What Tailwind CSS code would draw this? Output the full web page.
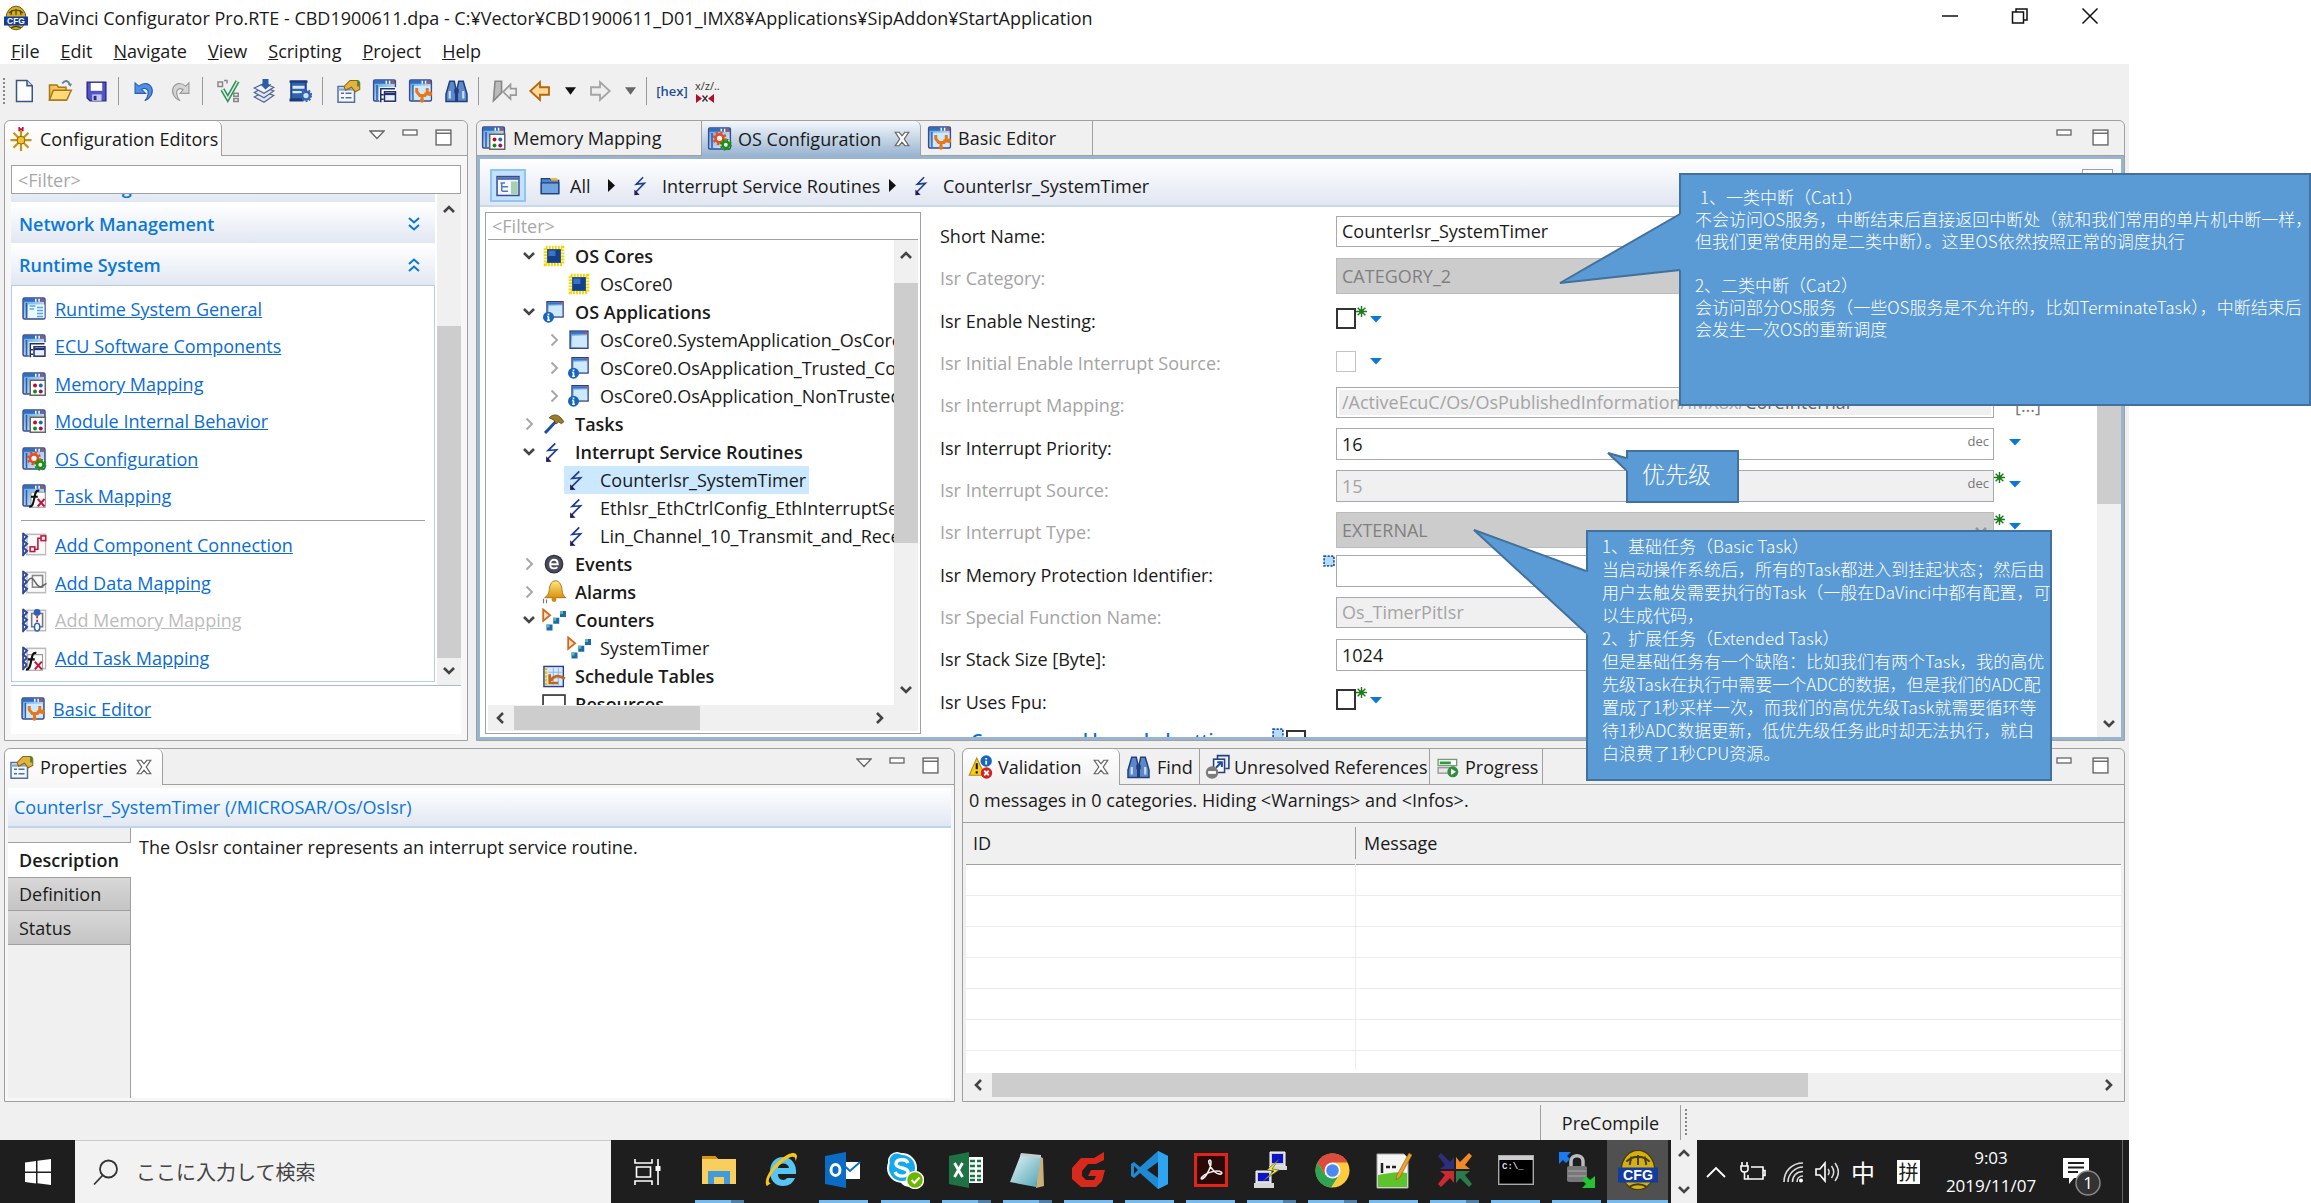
<!DOCTYPE html>
<html lang="en">
<head>
  <meta charset="UTF-8">
  <meta name="viewport" content="width=device-width, initial-scale=1.0">
  <title>DaVinci Configurator Pro.RTE</title>
  <script src="https://cdn.jsdelivr.net/npm/@tailwindcss/browser@4"></script>
</head>
<body class="bg-white overflow-x-hidden font-['Open_Sans','Noto_Sans_CJK_JP',sans-serif] text-[18px] leading-[24px] text-[#1a1a1a]">

  <!-- Icon set -->
  <svg width="0" height="0" class="absolute" aria-hidden="true">
    <defs>
      <linearGradient id="gBlue" x1="0" y1="0" x2="1" y2="1"><stop offset="0" stop-color="#5b9fe0"/><stop offset="1" stop-color="#eef9ff"/></linearGradient>
      <linearGradient id="gGold" x1="0" y1="0" x2="0" y2="1"><stop offset="0" stop-color="#ffe680"/><stop offset="1" stop-color="#d9930d"/></linearGradient>
      <linearGradient id="gNote" x1="0" y1="0" x2="1" y2="1"><stop offset="0" stop-color="#e8f6f8"/><stop offset="1" stop-color="#4fa3b5"/></linearGradient>
      <symbol id="win" viewBox="0 0 16 16"><rect x=".7" y=".7" width="14.6" height="14" rx="1" fill="url(#gBlue)" stroke="#3a4a8c"/><path d="M1 2.2h14" stroke="#2f6fc0" stroke-width="2"/><path d="M9.2 1.2v2M11.4 1.2v2" stroke="#fff"/><path d="M13.5 1.2v2" stroke="#e8442c" stroke-width="1.3"/><path d="M3 4v10" stroke="#2a5ea8"/></symbol>
      <symbol id="general" viewBox="0 0 16 16"><use href="#win"/><path d="M4 5h11v9H4z" fill="#eaf8ff"/><path d="M5 6h4M5 8h3M10 7h4M10 9h4M10 11h4M10 13h4" stroke="#58a8e0"/></symbol>
      <symbol id="ecu" viewBox="0 0 16 16"><use href="#win"/><path d="M4.500 15V5.500H16V16z" fill="#fff"/><path d="M5.500 15.500V6.500H15M5 10.500h2.500M5 13.500h2.500" fill="none" stroke="#23306e"/><rect x="8" y="8.500" width="7.300" height="6.300" fill="#e8f0fa" stroke="#23306e"/><path d="M8 10h7" stroke="#23306e" stroke-width="1.500"/></symbol>
      <symbol id="dots" viewBox="0 0 16 16"><use href="#win"/><rect x="5.500" y="5.500" width="10" height="10" fill="#fff" stroke="#666"/><circle cx="8.700" cy="9" r="1.300" fill="#d0021b"/><circle cx="12.500" cy="9" r="1.300" fill="#1466c8"/><circle cx="8.700" cy="13" r="1.300" fill="#0d8a1a"/><circle cx="12.500" cy="13" r="1.300" fill="#96125a"/></symbol>
      <symbol id="gears" viewBox="0 0 16 16"><use href="#win"/><circle cx="8" cy="7.500" r="2.600" fill="#fff" stroke="#f0481e" stroke-width="1.700"/><circle cx="8" cy="7.500" r="4" fill="none" stroke="#f0481e" stroke-width="1.400" stroke-dasharray="1.500 1.640"/><circle cx="12.200" cy="11.800" r="2.100" fill="#fff" stroke="#17920f" stroke-width="1.600"/><circle cx="12.200" cy="11.800" r="3.400" fill="none" stroke="#17920f" stroke-width="1.300" stroke-dasharray="1.300 1.370"/></symbol>
      <symbol id="fx" viewBox="0 0 16 16"><path d="M6 15.500V5.500h9.500v10z" fill="#fff" stroke="#999" stroke-width=".7"/><path d="M11.500 4.500C9 4 8.800 6.500 8.200 9.500S7 15.600 4.800 15M6 8.500h4.500" fill="none" stroke="#111" stroke-width="1.400"/><path d="M10.500 10l4.500 5M15 10l-4.500 5" stroke="#c4143c" stroke-width="1.300"/></symbol>
      <symbol id="task" viewBox="0 0 16 16"><use href="#win"/><use href="#fx"/></symbol>
      <symbol id="spring" viewBox="0 0 16 16"><rect x="3.500" y="1.500" width="12" height="13" fill="#fafafa" stroke="#bbb"/><path d="M1 .5v15" stroke="#1c2c78" stroke-width="1"/><path d="M1 1l2.500 2L1 5.500l2.500 2L1 10l2.500 2L1 14.800" fill="none" stroke="#2a4aa0" stroke-width="1.300"/></symbol>
      <symbol id="addconn" viewBox="0 0 16 16"><use href="#spring"/><rect x="5.500" y="9.500" width="3" height="3" fill="none" stroke="#c4143c"/><rect x="12.500" y="2.500" width="3" height="3" fill="none" stroke="#c4143c"/><path d="M8.500 11h2V4h2" fill="none" stroke="#c4143c"/></symbol>
      <symbol id="adddata" viewBox="0 0 16 16"><use href="#spring"/><rect x="7" y="3.500" width="6.500" height="7.500" fill="none" stroke="#888"/><path d="M4 7c3-4 4 0 6 2.500s3 1 6-1" fill="none" stroke="#666"/></symbol>
      <symbol id="addmem" viewBox="0 0 16 16"><use href="#spring"/><rect x="6.500" y="3.500" width="7" height="8.500" fill="none" stroke="#777"/><circle cx="10" cy="2.800" r="2.200" fill="#2a62b8"/><path d="M10 5v4.500" stroke="#d0021b" stroke-dasharray="1.500 1"/><ellipse cx="10" cy="12.200" rx="1.700" ry="2.500" fill="#fff" stroke="#2a62b8"/></symbol>
      <symbol id="addtask" viewBox="0 0 16 16"><use href="#spring"/><g transform="translate(-2 0)"><use href="#fx"/></g></symbol>
      <symbol id="basic" viewBox="0 0 16 16"><use href="#win"/><path d="M3.500 4.500h11V14h-11z" fill="#cdeafc"/><path d="M5.500 6v2.500l2 2.500h3.500l1.500-2V6M9 11v3.500M10.500 10h4" fill="none" stroke="#e8771a" stroke-width="2"/><circle cx="14.300" cy="9.800" r="1.500" fill="#e8771a"/><circle cx="9" cy="14.500" r="1.400" fill="#e8771a"/></symbol>
      <symbol id="star" viewBox="0 0 16 16"><path d="M8 1.500v14.500M1 8.800h14M3 3.800l10 10M13 3.800l-10 10" stroke="#c9940f" stroke-width="1.500"/><circle cx="8" cy="8.800" r="2.600" fill="#f4c430" stroke="#8a5a08" stroke-width=".6"/><path d="M6.800 0v2.800M9.200 0v2.800M6.800 1.400h2.400" stroke="#c4143c" stroke-width="1.100"/></symbol>
      <symbol id="bolt" viewBox="0 0 16 16"><path d="M10.500 1L5 6.500l6.500-.6L4.500 13" fill="none" stroke="#1f3f8f" stroke-width="1.300"/><path d="M3.500 15.300V10.800l4.200 4.200z" fill="#241a5c"/></symbol>
      <symbol id="chip" viewBox="0 0 16 16"><rect x="2" y="2" width="12" height="12" fill="none" stroke="#f0d800" stroke-width="3" stroke-dasharray="1.400 .8"/><rect x="3" y="3" width="10" height="10" fill="#12408a"/><rect x="4" y="4" width="5" height="4" fill="#3a72c4"/></symbol>
      <symbol id="app" viewBox="0 0 16 16"><rect x="1.500" y="1.500" width="13" height="12.500" fill="url(#gBlue)" stroke="#2c3e86"/><path d="M2 3h12" stroke="#3c74c4" stroke-width="1.800"/><path d="M12.500 2.200v1.600" stroke="#e8442c" stroke-width="1.400"/><path d="M3 5h10.500v8H3z" fill="#cdeafc"/></symbol>
      <symbol id="appi" viewBox="0 0 16 16"><g transform="translate(1.500 -1)"><use href="#app" width="14.500" height="14.500"/></g><circle cx="4" cy="11.800" r="4" fill="#1666c0"/><path d="M4 9v1.300M4 11.200v3M3 14h2M3 11.300h1" stroke="#fff" stroke-width="1.200"/></symbol>
      <symbol id="hammer" viewBox="0 0 16 16"><path d="M1.500 14.500L9.500 6" stroke="#1d4fa8" stroke-width="2.200"/><path d="M4.500 3.500C7 .5 11 1 13 3.500l2.200 2.800-1.800 1.500-2-1.300-2 1.500L7.800 5z" fill="#9a7a2c" stroke="#5c4412" stroke-width=".6"/></symbol>
      <symbol id="event" viewBox="0 0 16 16"><circle cx="8" cy="8" r="7" fill="#4b4b60" stroke="#30303f"/><path d="M5 8.200h6C11 5.500 9.600 4.600 8 4.600S4.900 6 4.900 8.100 6.300 11.500 8 11.500c1.200 0 2-.3 2.700-1" fill="none" stroke="#fff" stroke-width="1.500"/></symbol>
      <symbol id="bell" viewBox="0 0 16 16"><path d="M9 .5c-3 0-4 3.500-4.200 6.500-.2 2-1.200 3.500-3 4.800h14c-1.500-1.300-2.200-2.800-2.400-4.800C13.200 4 12 .5 9 .5z" fill="url(#gGold)" stroke="#a86c08" stroke-width=".6"/><circle cx="8" cy="13" r="1.600" fill="#c88a10"/><path d="M1 12.500v3M3 13v2.500" stroke="#777" stroke-width=".8"/></symbol>
      <symbol id="counter" viewBox="0 0 16 16"><path d="M.8 1l4.600 3.800L.8 8.600z" fill="#fde3c4" stroke="#d2691e" stroke-width="1.200"/><path d="M12 2h4v4h-4zM7.500 6.500h4v4h-4zM3 11h4v4H3z" fill="#1c6aa8"/><path d="M12 2h2v2h-2zM7.500 6.500h2v2h-2zM3 11h2v2H3z" fill="#5fb8b0"/></symbol>
      <symbol id="sched" viewBox="0 0 16 16"><rect x="1" y="1" width="13.500" height="14" fill="#d8eaff" stroke="#2c3e86"/><path d="M2.500 2v12" stroke="#e8c800" stroke-width="1.600" stroke-dasharray="1.600 1"/><path d="M4 5h10M4 9h10M7.500 2v12M11 2v12" stroke="#8fb8e8" stroke-width=".7"/><path d="M5 6.500v6h6M6 11c1-3.500 5-4.500 9.500-1.500" fill="none" stroke="#c86414" stroke-width="1.800"/></symbol>
      <symbol id="table" viewBox="0 0 16 16"><rect x=".7" y=".7" width="14.600" height="14" fill="#fff" stroke="#444" stroke-width="1.200"/></symbol>
      <symbol id="folder" viewBox="0 0 16 16"><path d="M1 2h7l1 1.500h6V14H1z" fill="#4c86cc" stroke="#1f3f7f"/><path d="M8 1.500h5.500l1 2.300H9z" fill="#f0b83c"/><path d="M1 5.500h14V14H1z" fill="#6fa4de" stroke="#1f3f7f"/></symbol>
      <symbol id="tree" viewBox="0 0 16 16"><rect x=".7" y="1.700" width="14.600" height="12.600" fill="#f2f8ff" stroke="#3a4a8c"/><path d="M1 3h14" stroke="#4d6fb0" stroke-width="1.800"/><path d="M3 6h3M4 8.500h4M4 11.500h4M3.800 6v5.500" stroke="#5878b0"/><rect x="10" y="5" width="4.500" height="8.500" fill="#a4d0b4"/></symbol>
      <symbol id="new" viewBox="0 0 16 16"><path d="M3 1h7l3.500 3.500V15H3z" fill="#fbfdff" stroke="#3a567c"/><path d="M10 1v3.500h3.500" fill="#c8d8ea" stroke="#3a567c"/></symbol>
      <symbol id="open" viewBox="0 0 16 16"><path d="M1 4h5l1 1.500h5V14H1z" fill="#f3c55c" stroke="#a87814"/><path d="M3.500 7.500h12L12.500 14H1z" fill="#ffd97a" stroke="#a87814"/><path d="M9.500 3c2-2.500 4-2 5 .5" fill="none" stroke="#5f7f9a" stroke-width="1.300"/><path d="M13 3.200h3l-1 2z" fill="#5f7f9a"/></symbol>
      <symbol id="save" viewBox="0 0 16 16"><path d="M1.500 1.500h13v13h-11l-2-2z" fill="#5353c6" stroke="#2c2c8a"/><path d="M4 2h8v5.500H4z" fill="#fff"/><path d="M5 10h6.500v4.500H5z" fill="#c8c8e8"/><path d="M6 11h2v3H6z" fill="#2c2c8a"/></symbol>
      <symbol id="undo" viewBox="0 0 16 16"><path d="M2.500 3v6.500H9L6.500 7C9 5.500 11 7 10.500 10c-.2 1.500-1 3-2 4 3.500-1.500 5.500-5 4.200-8C11.300 3 7.800 2.500 4.800 5z" fill="#4f8fe8" stroke="#2c5cb0" stroke-width=".7"/></symbol>
      <symbol id="redo" viewBox="0 0 16 16"><path d="M13.500 3v6.500H8L10 7.200C7.500 5.700 5.500 7 6 10c.2 1.500 1 3 2 4-3.500-1.500-5.500-5-4.200-8C5.200 3 8.600 2.500 11.400 5z" fill="#d4d4d4" stroke="#9a9a9a" stroke-width=".7"/></symbol>
      <symbol id="check" viewBox="0 0 16 16"><path d="M4 7l3.500 6L14 1.500" fill="none" stroke="#2f8f5f" stroke-width="3"/><path d="M4 7l3.500 6L14 1.500" fill="none" stroke="#d8f0e0" stroke-width="1"/><path d="M1 2h3v3H1zM5 1h2v2M11.500 9.500h3v2h-3zM11.500 13h3v2h-3z" fill="none" stroke="#888"/></symbol>
      <symbol id="layers" viewBox="0 0 16 16"><path d="M8 8.500l6.500 2.500L8 15.500 1.500 12z" fill="#dfe8f4" stroke="#53628f" stroke-width=".8"/><path d="M8 5.500l6.500 2.500L8 12.500 1.500 9z" fill="#dfe8f4" stroke="#53628f" stroke-width=".8"/><path d="M8 3l6.500 2.500L8 9.500 1.500 6z" fill="#eef4fc" stroke="#53628f" stroke-width=".8"/><path d="M7 0h4v3.500h2L9 7 5.500 3.500H7z" fill="#2a5ea8"/></symbol>
      <symbol id="gen" viewBox="0 0 16 16"><path d="M2 1.500h10v12H2z" fill="#2f62b0" stroke="#1c3a7c"/><path d="M3 4.500h8v2H3zM3 8h8v1.500H3z" fill="#dbe8fa"/><path d="M1 1h12v1.500H1zM1 13h9v2H1z" fill="#1c3a7c"/><circle cx="12" cy="11" r="2.600" fill="#cfe0f8" stroke="#3464b0" stroke-width="1.700"/><circle cx="12" cy="11" r="3.800" fill="none" stroke="#3464b0" stroke-dasharray="1.300 1.100"/></symbol>
      <symbol id="props" viewBox="0 0 16 16"><rect x="1" y="5" width="11" height="10.500" fill="#f4f8fc" stroke="#51709c"/><path d="M1 7h11" stroke="#7fa4d4" stroke-width="1.500"/><path d="M3 9.500h2M6 9.500h4M3 12.500h2M6 12.500h4" stroke="#51709c"/><path d="M5 5l4-4h5l1.500 1.500V7l-3 1.500L10 5.500 6 7.500z" fill="#e2b43c" stroke="#8a6414" stroke-width=".7"/><path d="M14.500 1v4" stroke="#3a8a3a" stroke-width="1.500"/></symbol>
      <symbol id="binoc" viewBox="0 0 16 16"><path d="M3.500 1.500h3L7.500 6v9h-6.500v-5zM12.500 1.500h-3L8.500 6v9H15v-5z" fill="#5c88c8" stroke="#1f3f7f"/><path d="M6.500 6.500h3v3h-3z" fill="#1f3f7f"/><path d="M3.500 8v5M12.500 8v5" stroke="#c8dcf8" stroke-width="1.500"/></symbol>
      <symbol id="lastedit" viewBox="0 0 16 16"><path d="M15.500 6.500v4H12V13L7.500 8.500 12 4v2.500z" fill="#eee" stroke="#999"/><path d="M1.500 14L2.500 2h4v7z" fill="#bbb" stroke="#888"/></symbol>
      <symbol id="back" viewBox="0 0 16 16"><path d="M14 5.500v5H8V14L1.500 8 8 2v3.500z" fill="#ffd89a" stroke="#b8640a" stroke-width="1.200"/></symbol>
      <symbol id="fwd" viewBox="0 0 16 16"><path d="M2 5.500v5h6V14l6.500-6L8 2v3.500z" fill="#eee" stroke="#a4a4a4" stroke-width="1.200"/></symbol>
      <symbol id="close" viewBox="0 0 16 16"><path d="M2 2h3.500L8 5.200 10.500 2H14L10 8l4 6h-3.500L8 10.800 5.500 14H2l4-6z" fill="#fff" stroke="#666" stroke-width="1.100"/></symbol>
      <symbol id="valid" viewBox="0 0 16 16"><path d="M5.500 2L.5 13.500h10.500z" fill="#f8cc1c" stroke="#b88a08" stroke-width=".7"/><path d="M5.500 5.500v4M5.500 10.800v1.500" stroke="#111" stroke-width="1.400"/><circle cx="11.800" cy="4" r="3.800" fill="#1666c0"/><path d="M11.800 2v1M11.800 3.800v2.500" stroke="#fff" stroke-width="1.200"/><circle cx="12" cy="12" r="3.800" fill="#d42020"/><path d="M10.500 10.500l3 3M13.500 10.500l-3 3" stroke="#fff" stroke-width="1.200"/></symbol>
      <symbol id="unres" viewBox="0 0 16 16"><path d="M8 3V.7h7.300V9H13" fill="#e8f0fc" stroke="#24407f"/><rect x="5.500" y="3" width="7" height="8.500" fill="#fff" stroke="#24407f"/><path d="M7 8.500l3.500-3.500M7.800 5h3v3" fill="none" stroke="#1c4ca0" stroke-width="1.300"/><circle cx="4.500" cy="11.500" r="4" fill="#7c7c7c"/><path d="M2 11.500h5" stroke="#fff" stroke-width="1.800"/></symbol>
      <symbol id="prog" viewBox="0 0 16 16"><rect x=".8" y="2.500" width="13.500" height="4.500" fill="#fff" stroke="#7a9a7a"/><path d="M2 4h8v2H2z" fill="#2f9a3f"/><rect x=".8" y="8.500" width="9" height="4" fill="#e8e8e8" stroke="#999"/><circle cx="11.500" cy="11.500" r="4" fill="#2f8f3f"/><path d="M10.200 9.200v4.600l3.600-2.300z" fill="#fff"/></symbol>
      <symbol id="v" viewBox="0 0 14 14"><path d="M2 4l5 5 5-5" fill="none" stroke="#444" stroke-width="2.600"/></symbol>
      <symbol id="r" viewBox="0 0 14 14"><path d="M4.500 1.500L10 7l-5.500 5.500" fill="none" stroke="#a8a8a8" stroke-width="2"/></symbol>
      <symbol id="max" viewBox="0 0 16 16"><rect x="1" y="1" width="14" height="14" fill="#fff" stroke="#666" stroke-width="1.300"/><path d="M1 4h14" stroke="#666" stroke-width="1.300"/></symbol>
      <symbol id="min" viewBox="0 0 16 16"><rect x="1" y="1" width="14" height="5" fill="#fff" stroke="#666" stroke-width="1.300"/></symbol>
      <symbol id="menu" viewBox="0 0 16 16"><path d="M1 2h14l-7 7.500z" fill="#fff" stroke="#666" stroke-width="1.300"/></symbol>
      <symbol id="ast" viewBox="0 0 10 10"><path d="M5 0v10M0 5h10M1.500 1.500l7 7M8.500 1.500l-7 7" stroke="#1c7a1c" stroke-width="1.300"/><circle cx="5" cy="5" r="2" fill="#1c7a1c"/></symbol>
      <symbol id="drop" viewBox="0 0 12 8"><path d="M0 1h12L6 7.500z" fill="#0a78d7"/></symbol>
      <symbol id="mark" viewBox="0 0 11 11"><rect x="1" y="1" width="9" height="9" fill="#b8dcf8" stroke="#1c5cb0" stroke-width="1.600" stroke-dasharray="2 1.200"/></symbol>
      <symbol id="cfg" viewBox="0 0 24 24"><ellipse cx="12" cy="12" rx="10" ry="11.800" fill="#d4b014" stroke="#4a3c08" stroke-width=".8"/><path d="M5 7c4-4 10-4 14 0M12 3v6M8 4l-1 5M16 4l1 5M7 22c3-2 7-2 10 0" fill="none" stroke="#4a3c08" stroke-width="1.200"/><rect x="0" y="10.500" width="24" height="9" fill="#143c9c"/><text x="12" y="18" text-anchor="middle" font-family="Liberation Sans" font-weight="bold" font-size="8.500" fill="#fff">CFG</text></symbol>
    </defs>
  </svg>

  <div class="relative min-h-screen">
    <div class="mr-[182px] min-h-screen flex flex-col bg-[#f0f0f0]">

      <!-- Title bar -->
      <header class="h-[36px] flex items-center bg-white pl-1 pr-[29px]">
        <svg class="w-[24px] h-[28px]"><use href="#cfg"/></svg>
        <h1 class="pl-2 flex-1 whitespace-nowrap">DaVinci Configurator Pro.RTE - CBD1900611.dpa - C:¥Vector¥CBD1900611_D01_IMX8¥Applications¥SipAddon¥StartApplication</h1>
        <div class="flex items-center gap-[50px] pb-1">
          <button aria-label="Minimize"><svg class="w-5 h-5" viewBox="0 0 20 20"><path d="M2 10h16" stroke="#111" stroke-width="1.500"/></svg></button>
          <button aria-label="Restore"><svg class="w-5 h-5" viewBox="0 0 20 20"><path d="M2.500 6h11v11h-11zM6 6V3h11v11h-3.500" fill="none" stroke="#111" stroke-width="1.500"/></svg></button>
          <button aria-label="Close"><svg class="w-5 h-5" viewBox="0 0 20 20"><path d="M2.500 2.500l15 15M17.500 2.500l-15 15" stroke="#111" stroke-width="1.500"/></svg></button>
        </div>
      </header>

      <!-- Menu -->
      <nav class="h-[28px] flex items-center gap-[21px] bg-white pl-[11px] pt-[2px]">
        <button><u>F</u>ile</button>
        <button><u>E</u>dit</button>
        <button><u>N</u>avigate</button>
        <button><u>V</u>iew</button>
        <button><u>S</u>cripting</button>
        <button><u>P</u>roject</button>
        <button><u>H</u>elp</button>
      </nav>

      <!-- Toolbar -->
      <div class="h-[56px] flex items-center pb-[2px]">
        <span class="w-[6px] h-[26px] border-l-2 border-dotted border-[#888] ml-[3px] -mr-[3px]"></span>
        <button class="w-[36px] flex justify-center" aria-label="New"><svg class="w-[24px] h-[24px]"><use href="#new"/></svg></button>
        <button class="w-[36px] flex justify-center" aria-label="Open"><svg class="w-[26px] h-[24px]"><use href="#open"/></svg></button>
        <button class="w-[36px] flex justify-center" aria-label="Save"><svg class="w-[23px] h-[23px]"><use href="#save"/></svg></button>
        <span class="w-px h-[28px] bg-[#999] ml-1 mr-[7px]"></span>
        <button class="w-[36px] flex justify-center" aria-label="Undo"><svg class="w-[26px] h-[26px]"><use href="#undo"/></svg></button>
        <button class="w-[36px] flex justify-center" aria-label="Redo"><svg class="w-[26px] h-[26px]"><use href="#redo"/></svg></button>
        <span class="w-px h-[28px] bg-[#999] ml-1 mr-[7px]"></span>
        <button class="w-[36px] flex justify-center" aria-label="Validate"><svg class="w-[25px] h-[24px]"><use href="#check"/></svg></button>
        <button class="w-[36px] flex justify-center" aria-label="Layers"><svg class="w-[24px] h-[24px]"><use href="#layers"/></svg></button>
        <button class="w-[36px] flex justify-center" aria-label="Generate"><svg class="w-[24px] h-[24px]"><use href="#gen"/></svg></button>
        <span class="w-px h-[28px] bg-[#999] ml-1 mr-[7px]"></span>
        <button class="w-[36px] flex justify-center" aria-label="Properties"><svg class="w-[25px] h-[24px]"><use href="#props"/></svg></button>
        <button class="w-[36px] flex justify-center" aria-label="Components"><svg class="w-[25px] h-[24px]"><use href="#ecu"/></svg></button>
        <button class="w-[36px] flex justify-center" aria-label="Basic Editor"><svg class="w-[25px] h-[24px]"><use href="#basic"/></svg></button>
        <button class="w-[36px] flex justify-center" aria-label="Find"><svg class="w-[25px] h-[24px]"><use href="#binoc"/></svg></button>
        <span class="w-px h-[28px] bg-[#999] ml-1 mr-[7px]"></span>
        <button class="w-[36px] flex justify-center" aria-label="Last edit"><svg class="w-[26px] h-[26px]"><use href="#lastedit"/></svg></button>
        <button class="w-[36px] flex justify-center" aria-label="Back"><svg class="w-[24px] h-[24px]"><use href="#back"/></svg></button>
        <button class="w-[24px] flex justify-center" aria-label="Back history"><svg class="w-[11px] h-[8px]" viewBox="0 0 12 8"><path d="M0 0h12L6 8z" fill="#111"/></svg></button>
        <button class="w-[36px] flex justify-center" aria-label="Forward"><svg class="w-[24px] h-[24px]"><use href="#fwd"/></svg></button>
        <button class="w-[24px] flex justify-center" aria-label="Forward history"><svg class="w-[11px] h-[8px]" viewBox="0 0 12 8"><path d="M0 0h12L6 8z" fill="#666"/></svg></button>
        <span class="w-px h-[28px] bg-[#999] ml-1 mr-[7px]"></span>
        <button class="w-[36px] text-[13px] leading-[20px] font-semibold text-[#1f4f8f]">[hex]</button>
        <button class="w-[36px]" aria-label="Names"><svg class="w-[27px] h-[28px] mx-auto" viewBox="0 0 27 28"><text x="0" y="13" font-family="Open Sans" font-size="11" fill="#333">x/z/..</text><path d="M1 17v9l6-4.500zM19 17v9l-6-4.500z" fill="#b01030"/><path d="M7.500 18.500l5 6M12.500 18.500l-5 6" stroke="#333" stroke-width="1.300"/></svg></button>
      </div>

      <!-- Upper row -->
      <div class="flex gap-2 pl-1 pr-1 h-[621px]">

        <!-- Configuration Editors -->
        <section class="w-[464px] shrink-0 flex flex-col border border-[#a0a0a0] rounded-t-md bg-[#f7f7f7]">
          <div class="h-[35px] shrink-0 flex">
            <div class="w-[217px] flex items-center gap-[7px] pl-1 border-r border-[#a0a0a0] rounded-tr-md bg-gradient-to-b from-white to-[#f7f7f7] rounded-tl-md whitespace-nowrap">
              <svg class="w-[24px] h-[26px] shrink-0"><use href="#star"/></svg>Configuration Editors
            </div>
            <div class="flex-1 flex justify-end gap-[17px] pt-[8px] pr-[15px] border-b border-[#a0a0a0] bg-[#f0f0f0] rounded-tr-md">
              <svg class="w-[16px] h-[16px]"><use href="#menu"/></svg>
              <svg class="w-[16px] h-[16px]"><use href="#min"/></svg>
              <svg class="w-[17px] h-[17px]"><use href="#max"/></svg>
            </div>
          </div>
          <div class="flex-1 min-h-0 flex flex-col m-[6px] mt-[9px] bg-white">
            <input type="text" aria-label="Filter editors" placeholder="&lt;Filter&gt;" class="h-[29px] shrink-0 border border-[#a0a0a0] bg-white px-[6px] placeholder:text-[#a8a8a8]">
            <div class="flex h-[491px] overflow-hidden">
              <div class="flex-1 min-w-0">
                <h2 class="h-[39px] -mt-[31px] mb-[2px] flex items-center pt-[8px] px-2 font-semibold text-[#0a78d7] bg-gradient-to-b from-white to-[#e1e7f2]">Mode Management</h2>
                <h2 class="h-[39px] mb-[2px] flex items-center justify-between pl-2 pr-[14px] font-semibold text-[#0a78d7] bg-gradient-to-b from-white to-[#e1e7f2]">Network Management
                  <svg class="w-[14px] h-[16px]" viewBox="0 0 14 16"><path d="M2 2l5 4.500L12 2M2 9l5 4.500L12 9" fill="none" stroke="#0a78d7" stroke-width="2"/></svg></h2>
                <h2 class="h-[40px] flex items-center justify-between pl-2 pr-[14px] font-semibold text-[#0a78d7] bg-gradient-to-b from-white to-[#e1e7f2]">Runtime System
                  <svg class="w-[14px] h-[16px]" viewBox="0 0 14 16"><path d="M2 7l5-4.500L12 7M2 14l5-4.500L12 14" fill="none" stroke="#0a78d7" stroke-width="2"/></svg></h2>
                <div class="border border-[#b8cce4] pt-1 pb-1 px-[9px] text-[#0a6cd6]">
                  <ul class="grid grid-rows-6 h-[226px] pb-px">
                    <li class="flex items-center gap-2"><svg class="w-[26px] h-[24px]"><use href="#general"/></svg><a href="#" class="underline">Runtime System General</a></li>
                    <li class="flex items-center gap-2"><svg class="w-[26px] h-[24px]"><use href="#ecu"/></svg><a href="#" class="underline">ECU Software Components</a></li>
                    <li class="flex items-center gap-2"><svg class="w-[26px] h-[24px]"><use href="#dots"/></svg><a href="#" class="underline">Memory Mapping</a></li>
                    <li class="flex items-center gap-2"><svg class="w-[26px] h-[24px]"><use href="#dots"/></svg><a href="#" class="underline">Module Internal Behavior</a></li>
                    <li class="flex items-center gap-2"><svg class="w-[26px] h-[24px]"><use href="#gears"/></svg><a href="#" class="underline">OS Configuration</a></li>
                    <li class="flex items-center gap-2"><svg class="w-[26px] h-[24px]"><use href="#task"/></svg><a href="#" class="underline">Task Mapping</a></li>
                  </ul>
                  <hr class="border-[#a0a0a0] mt-1 mb-[5px]">
                  <ul class="grid grid-rows-4 h-[151px]">
                    <li class="flex items-center gap-2"><svg class="w-[26px] h-[25px]"><use href="#addconn"/></svg><a href="#" class="underline">Add Component Connection</a></li>
                    <li class="flex items-center gap-2"><svg class="w-[26px] h-[25px]"><use href="#adddata"/></svg><a href="#" class="underline">Add Data Mapping</a></li>
                    <li class="flex items-center gap-2"><svg class="w-[26px] h-[25px]"><use href="#addmem"/></svg><a href="#" class="underline text-[#bcbcbc]">Add Memory Mapping</a></li>
                    <li class="flex items-center gap-2"><svg class="w-[26px] h-[25px]"><use href="#addtask"/></svg><a href="#" class="underline">Add Task Mapping</a></li>
                  </ul>
                </div>
              </div>
              <div class="w-[24px] ml-[2px] flex flex-col items-center bg-[#f0f0f0]">
                <svg class="w-[14px] h-[14px] mt-[8px] rotate-180"><use href="#v"/></svg>
                <div class="w-full h-[332px] mt-[110px] bg-[#cdcdcd]"></div>
                <svg class="w-[14px] h-[14px] mt-[6px]"><use href="#v"/></svg>
              </div>
            </div>
            <div class="border-t border-[#a9b9d0] h-[46px] flex items-center gap-[7px] pl-[9px] text-[#0a6cd6]">
              <svg class="w-[26px] h-[24px]"><use href="#basic"/></svg><a href="#" class="underline">Basic Editor</a>
            </div>
          </div>
        </section>

        <!-- Editor area -->
        <section class="flex-1 min-w-0 flex flex-col border border-[#a0a0a0] rounded-t-md">
          <div class="h-[35px] shrink-0 flex whitespace-nowrap" role="tablist">
            <button role="tab" class="w-[225px] flex items-center gap-[7px] pl-1 border-r border-b border-[#a0a0a0]"><svg class="w-[25px] h-[24px] shrink-0"><use href="#dots"/></svg>Memory Mapping</button>
            <button role="tab" class="w-[219px] flex items-center gap-[6px] pl-[5px] border-r border-[#a0a0a0] rounded-t-md bg-gradient-to-b from-[#f4f8fc] to-[#99b4d1]"><svg class="w-[25px] h-[24px] shrink-0"><use href="#gears"/></svg>OS Configuration<svg class="w-[18px] h-[18px] ml-[6px]"><use href="#close"/></svg></button>
            <button role="tab" class="w-[172px] flex items-center gap-[6px] pl-[6px] border-r border-b border-[#a0a0a0]"><svg class="w-[25px] h-[24px] shrink-0"><use href="#basic"/></svg>Basic Editor</button>
            <div class="flex-1 flex justify-end gap-[20px] pt-[8px] pr-[15px] border-b border-[#a0a0a0]">
              <svg class="w-[16px] h-[16px]"><use href="#min"/></svg>
              <svg class="w-[17px] h-[17px]"><use href="#max"/></svg>
            </div>
          </div>
          <div class="flex-1 min-h-0 flex flex-col border-[3px] border-[#99b4d1] bg-white">
            <nav class="h-[48px] shrink-0 flex items-center pt-[7px] pl-[10px] pr-[8px] border-b-2 border-[#c9d9ec] bg-gradient-to-b from-white to-[#e1e6f1] whitespace-nowrap">
              <button aria-label="Toggle tree" class="w-[36px] h-[33px] mr-[12px] flex items-center justify-center border-2 border-[#8fc4f4] bg-[#c4e2fb]"><svg class="w-[26px] h-[24px]"><use href="#tree"/></svg></button>
              <svg class="w-[24px] h-[20px]"><use href="#folder"/></svg>
              <button class="ml-[8px] w-[38px] text-left">All</button>
              <svg class="w-[7px] h-[13px]" viewBox="0 0 7 13"><path d="M0 0l7 6.500L0 13z" fill="#111"/></svg>
              <svg class="w-[22px] h-[20px] ml-[14px]"><use href="#bolt"/></svg>
              <button class="ml-[11px] w-[227px] text-left">Interrupt Service Routines</button>
              <svg class="w-[7px] h-[13px]" viewBox="0 0 7 13"><path d="M0 0l7 6.500L0 13z" fill="#111"/></svg>
              <svg class="w-[22px] h-[20px] ml-[14px]"><use href="#bolt"/></svg>
              <button class="ml-[11px]">CounterIsr_SystemTimer</button>
              <button aria-label="View menu" class="ml-auto w-[31px] h-[33px] border border-[#a0a0a0] bg-white"></button>
            </nav>
            <div class="flex-1 min-h-0 flex">

              <!-- Tree -->
              <div class="w-[436px] shrink-0 ml-[5px] mt-[5px] mb-[3px] flex flex-col border border-[#a0a0a0] p-[2px] pt-0">
                <input type="text" aria-label="Filter tree" placeholder="&lt;Filter&gt;" class="h-[27px] shrink-0 px-1 border-b border-[#a0a0a0] placeholder:text-[#a8a8a8]">
                <div class="flex-1 min-h-0 flex">
                  <ul class="flex-1 min-w-0 overflow-hidden pt-[2px] whitespace-nowrap">
                    <li class="h-[28px] flex items-center pl-[34px] font-semibold"><svg class="w-[14px] h-[14px]"><use href="#v"/></svg><svg class="w-[24px] h-[22px] ml-[6px] mr-[9px] shrink-0"><use href="#chip"/></svg>OS Cores</li>
                    <li class="h-[28px] flex items-center pl-[79px]"><svg class="w-[24px] h-[22px] mr-[9px] shrink-0"><use href="#chip"/></svg>OsCore0</li>
                    <li class="h-[28px] flex items-center pl-[34px] font-semibold"><svg class="w-[14px] h-[14px]"><use href="#v"/></svg><svg class="w-[24px] h-[22px] ml-[6px] mr-[9px] shrink-0"><use href="#appi"/></svg>OS Applications</li>
                    <li class="h-[28px] flex items-center pl-[59px]"><svg class="w-[14px] h-[14px] shrink-0"><use href="#r"/></svg><svg class="w-[24px] h-[22px] ml-[6px] mr-[9px] shrink-0"><use href="#app"/></svg>OsCore0.SystemApplication_OsCore0</li>
                    <li class="h-[28px] flex items-center pl-[59px]"><svg class="w-[14px] h-[14px] shrink-0"><use href="#r"/></svg><svg class="w-[24px] h-[22px] ml-[6px] mr-[9px] shrink-0"><use href="#appi"/></svg>OsCore0.OsApplication_Trusted_Core0</li>
                    <li class="h-[28px] flex items-center pl-[59px]"><svg class="w-[14px] h-[14px] shrink-0"><use href="#r"/></svg><svg class="w-[24px] h-[22px] ml-[6px] mr-[9px] shrink-0"><use href="#appi"/></svg>OsCore0.OsApplication_NonTrusted_Core0</li>
                    <li class="h-[28px] flex items-center pl-[34px] font-semibold"><svg class="w-[14px] h-[14px]"><use href="#r"/></svg><svg class="w-[24px] h-[22px] ml-[6px] mr-[9px] shrink-0"><use href="#hammer"/></svg>Tasks</li>
                    <li class="h-[28px] flex items-center pl-[34px] font-semibold"><svg class="w-[14px] h-[14px]"><use href="#v"/></svg><svg class="w-[22px] h-[21px] ml-[5px] mr-[12px] shrink-0"><use href="#bolt"/></svg>Interrupt Service Routines</li>
                    <li class="h-[28px] flex pl-[76px]"><span class="flex items-center pr-[3px] bg-[#cce8ff]"><svg class="w-[22px] h-[21px] ml-px mr-[13px] shrink-0"><use href="#bolt"/></svg>CounterIsr_SystemTimer</span></li>
                    <li class="h-[28px] flex items-center pl-[77px]"><svg class="w-[22px] h-[21px] mr-[13px] shrink-0"><use href="#bolt"/></svg>EthIsr_EthCtrlConfig_EthInterruptService</li>
                    <li class="h-[28px] flex items-center pl-[77px]"><svg class="w-[22px] h-[21px] mr-[13px] shrink-0"><use href="#bolt"/></svg>Lin_Channel_10_Transmit_and_Receive</li>
                    <li class="h-[28px] flex items-center pl-[34px] font-semibold"><svg class="w-[14px] h-[14px]"><use href="#r"/></svg><svg class="w-[24px] h-[20px] ml-[6px] mr-[9px] shrink-0"><use href="#event"/></svg>Events</li>
                    <li class="h-[28px] flex items-center pl-[34px] font-semibold"><svg class="w-[14px] h-[14px]"><use href="#r"/></svg><svg class="w-[24px] h-[24px] ml-[6px] mr-[9px] shrink-0"><use href="#bell"/></svg>Alarms</li>
                    <li class="h-[28px] flex items-center pl-[34px] font-semibold"><svg class="w-[14px] h-[14px]"><use href="#v"/></svg><svg class="w-[24px] h-[24px] ml-[6px] mr-[9px] shrink-0"><use href="#counter"/></svg>Counters</li>
                    <li class="h-[28px] flex items-center pl-[79px]"><svg class="w-[24px] h-[24px] mr-[9px] shrink-0"><use href="#counter"/></svg>SystemTimer</li>
                    <li class="h-[28px] flex items-center pl-[54px] font-semibold"><svg class="w-[24px] h-[23px] mr-[9px] shrink-0"><use href="#sched"/></svg>Schedule Tables</li>
                    <li class="h-[28px] flex items-start pt-[2px] pl-[54px] font-semibold"><svg class="w-[24px] h-[24px] mt-[2px] mr-[9px] shrink-0"><use href="#table"/></svg>Resources</li>
                  </ul>
                  <div class="w-[24px] shrink-0 flex flex-col items-center bg-[#f0f0f0]">
                    <svg class="w-[14px] h-[14px] mt-[8px] rotate-180"><use href="#v"/></svg>
                    <div class="w-full h-[260px] mt-[21px] bg-[#cdcdcd]"></div>
                    <svg class="w-[14px] h-[14px] mt-auto mb-[8px]"><use href="#v"/></svg>
                  </div>
                </div>
                <div class="h-[26px] shrink-0 flex items-center pl-[5px] pr-[31px] bg-[#f0f0f0]">
                  <svg class="w-[14px] h-[14px] rotate-90"><use href="#v"/></svg>
                  <div class="w-[186px] h-[24px] ml-[7px] bg-[#cdcdcd]"></div>
                  <svg class="w-[14px] h-[14px] ml-auto -rotate-90"><use href="#v"/></svg>
                </div>
              </div>

              <!-- Form -->
              <form class="flex-1 min-w-0 overflow-hidden pl-[19px] pt-[8px]">
                <div class="grid grid-rows-12 h-[508px]">
                  <div class="grid grid-cols-[396px_1fr_103px]">
                    <label for="f1" class="self-center">Short Name:</label>
                    <input id="f1" type="text" value="CounterIsr_SystemTimer" class="self-center mb-[10px] h-[31px] border border-[#a8a8b0] bg-white px-[5px]">
                  </div>
                  <div class="grid grid-cols-[396px_1fr_103px] text-[#a4a4a4]">
                    <label for="f2" class="self-center">Isr Category:</label>
                    <select id="f2" disabled class="self-center mb-[4px] h-[36px] appearance-none border border-[#bbb] bg-[#cccccc] px-[5px] text-[#808080] opacity-100"><option>CATEGORY_2</option></select>
                  </div>
                  <div class="grid grid-cols-[396px_1fr_103px]">
                    <label for="f3" class="self-center">Isr Enable Nesting:</label>
                    <div class="flex items-center mb-[4px]"><input id="f3" type="checkbox" class="appearance-none w-[20px] h-[21px] border-2 border-[#333] bg-white"><svg class="w-[11px] h-[11px] mb-[14px]"><use href="#ast"/></svg><svg class="w-[12px] h-[8px] ml-[3px]"><use href="#drop"/></svg></div>
                  </div>
                  <div class="grid grid-cols-[396px_1fr_103px] text-[#a4a4a4]">
                    <label for="f4" class="self-center">Isr Initial Enable Interrupt Source:</label>
                    <div class="flex items-center mb-[4px]"><input id="f4" type="checkbox" disabled class="appearance-none w-[20px] h-[21px] border border-[#c4c4c4] bg-white"><svg class="w-[12px] h-[8px] ml-[14px]"><use href="#drop"/></svg></div>
                  </div>
                  <div class="grid grid-cols-[396px_1fr_103px] text-[#a4a4a4]">
                    <label for="f5" class="self-center">Isr Interrupt Mapping:</label>
                    <div class="self-center mb-[6px] h-[31px] flex items-center border border-[#a8a8b0] bg-white p-[2px]"><div id="f5" class="flex-1 bg-[#f0f0f0] px-[3px] leading-[25px]">/ActiveEcuC/Os/OsPublishedInformation/IMX8x/<span class="text-[#666]">CoreInternal</span></div></div>
                    <button type="button" class="self-center text-left pl-[21px] text-[#777]">[...]</button>
                  </div>
                  <div class="grid grid-cols-[396px_1fr_103px]">
                    <label for="f6" class="self-center">Isr Interrupt Priority:</label>
                    <div class="self-center mb-[8px] h-[32px] flex border border-[#a8a8b0] bg-white pr-[4px]"><input id="f6" type="text" value="16" class="flex-1 px-[5px]"><span class="text-[13px] leading-[24px] text-[#777]">dec</span></div>
                    <div class="flex items-center mb-[12px] pl-[15px]"><svg class="w-[12px] h-[8px]"><use href="#drop"/></svg></div>
                  </div>
                  <div class="grid grid-cols-[396px_1fr_103px] text-[#a4a4a4]">
                    <label for="f7" class="self-center">Isr Interrupt Source:</label>
                    <div class="self-center mb-[8px] h-[32px] flex border border-[#a8a8b0] bg-[#f0f0f0] pr-[4px]"><input id="f7" type="text" disabled value="15" class="flex-1 px-[5px]"><span class="text-[13px] leading-[24px] text-[#777]">dec</span></div>
                    <div class="flex items-center mb-[12px]"><svg class="w-[11px] h-[11px] mb-[14px]"><use href="#ast"/></svg><svg class="w-[12px] h-[8px] ml-1"><use href="#drop"/></svg></div>
                  </div>
                  <div class="grid grid-cols-[396px_1fr_103px] text-[#a4a4a4]">
                    <label for="f8" class="self-center">Isr Interrupt Type:</label>
                    <div class="relative self-center mb-[4px]">
                      <select id="f8" disabled class="w-full h-[36px] appearance-none border border-[#bbb] bg-[#cccccc] px-[5px] text-[#808080] opacity-100"><option>EXTERNAL</option></select>
                      <svg class="absolute right-[6px] top-[12px] w-[14px] h-[14px] opacity-40"><use href="#v"/></svg>
                    </div>
                    <div class="flex items-center mb-[12px]"><svg class="w-[11px] h-[11px] mb-[14px]"><use href="#ast"/></svg><svg class="w-[12px] h-[8px] ml-1"><use href="#drop"/></svg></div>
                  </div>
                  <div class="grid grid-cols-[396px_1fr_103px]">
                    <label for="f9" class="self-center">Isr Memory Protection Identifier:</label>
                    <div class="relative self-center mb-[8px] h-[32px] flex border border-[#a8a8b0] bg-white"><svg class="absolute -left-[14px] -top-px w-[12px] h-[12px]"><use href="#mark"/></svg><input id="f9" type="text" class="flex-1 px-[5px]"></div>
                  </div>
                  <div class="grid grid-cols-[396px_1fr_103px] text-[#a4a4a4]">
                    <label for="f10" class="self-center">Isr Special Function Name:</label>
                    <input id="f10" type="text" disabled value="Os_TimerPitIsr" class="self-center mb-[10px] h-[31px] border border-[#a8a8b0] bg-[#f0f0f0] px-[5px]">
                  </div>
                  <div class="grid grid-cols-[396px_1fr_103px]">
                    <label for="f11" class="self-center">Isr Stack Size [Byte]:</label>
                    <input id="f11" type="text" value="1024" class="self-center mb-[8px] h-[32px] border border-[#a8a8b0] bg-white px-[5px]">
                  </div>
                  <div class="grid grid-cols-[396px_1fr_103px]">
                    <label for="f12" class="self-center">Isr Uses Fpu:</label>
                    <div class="flex items-center mb-[4px]"><input id="f12" type="checkbox" class="appearance-none w-[20px] h-[21px] border-2 border-[#333] bg-white"><svg class="w-[11px] h-[11px] mb-[14px]"><use href="#ast"/></svg><svg class="w-[12px] h-[8px] ml-[3px]"><use href="#drop"/></svg></div>
                  </div>
                </div>
                <div class="flex pl-[31px] pt-[5px]">
                  <label for="f13" class="w-[301px] leading-[24px] font-semibold text-[#0a6cd6] whitespace-nowrap">Common and bounded settings</label>
                  <svg class="w-[12px] h-[12px]"><use href="#mark"/></svg>
                  <input id="f13" type="checkbox" class="appearance-none w-[20px] h-[21px] mt-[2px] ml-[2px] border-2 border-[#333]">
                </div>
              </form>
              <div class="w-[24px] shrink-0 flex flex-col items-center bg-[#f0f0f0]">
                <svg class="w-[14px] h-[14px] mt-[8px] rotate-180"><use href="#v"/></svg>
                <div class="w-full h-[265px] mt-[10px] bg-[#cdcdcd]"></div>
                <svg class="w-[14px] h-[14px] mt-auto mb-[6px]"><use href="#v"/></svg>
              </div>
            </div>
          </div>
        </section>
      </div>

      <!-- Lower row -->
      <div class="flex-1 flex gap-[7px] pl-1 pr-1 pt-[7px]">

        <!-- Properties -->
        <section class="w-[951px] shrink-0 flex flex-col border border-[#a0a0a0] rounded-t-md bg-[#f7f7f7]">
          <div class="h-[36px] shrink-0 flex">
            <div class="w-[158px] flex items-center gap-[6px] pl-1 border-r border-[#a0a0a0] rounded-t-md bg-gradient-to-b from-white to-[#f7f7f7]">
              <svg class="w-[25px] h-[24px] shrink-0"><use href="#props"/></svg>Properties<svg class="w-[18px] h-[18px] ml-[2px] shrink-0"><use href="#close"/></svg>
            </div>
            <div class="flex-1 flex justify-end gap-[17px] pt-[8px] pr-[15px] border-b border-[#a0a0a0] bg-[#f0f0f0] rounded-tr-md">
              <svg class="w-[16px] h-[16px]"><use href="#menu"/></svg>
              <svg class="w-[16px] h-[16px]"><use href="#min"/></svg>
              <svg class="w-[17px] h-[17px]"><use href="#max"/></svg>
            </div>
          </div>
          <div class="flex-1 flex flex-col m-[3px] bg-white">
            <h2 class="h-[40px] flex items-center pl-[6px] border-b-2 border-[#c0d4ec] bg-gradient-to-b from-white to-[#e1e7f2] text-[#0a78d7]">CounterIsr_SystemTimer (/MICROSAR/Os/OsIsr)</h2>
            <div class="flex-1 flex">
              <div class="w-[123px] flex flex-col border-r border-[#a0a0a0] bg-[#f0f0f0]">
                <div class="h-[15px] border-b border-[#a0a0a0]"></div>
                <button class="h-[34px] pl-[11px] text-left font-semibold bg-white -mr-px">Description</button>
                <button class="h-[34px] pl-[11px] text-left border-y border-[#a0a0a0] bg-gradient-to-b from-[#d8d8d8] to-[#c4c4c4]">Definition</button>
                <button class="h-[34px] pl-[11px] text-left border-b border-[#a0a0a0] bg-gradient-to-b from-[#d8d8d8] to-[#c4c4c4]">Status</button>
              </div>
              <p class="pl-[8px] pt-[7px]">The OsIsr container represents an interrupt service routine.</p>
            </div>
          </div>
        </section>

        <!-- Validation -->
        <section class="flex-1 min-w-0 flex flex-col border border-[#a0a0a0] rounded-t-md">
          <div class="h-[36px] shrink-0 flex whitespace-nowrap" role="tablist">
            <button role="tab" class="w-[157px] flex items-center gap-[5px] pl-[5px] border-r border-[#a0a0a0] rounded-t-md bg-gradient-to-b from-white to-[#f0f0f0]"><svg class="w-[25px] h-[24px] shrink-0"><use href="#valid"/></svg>Validation<svg class="w-[18px] h-[18px] ml-[5px] shrink-0"><use href="#close"/></svg></button>
            <button role="tab" class="w-[80px] flex items-center gap-[6px] pl-[6px] border-r border-b border-[#a0a0a0]"><svg class="w-[25px] h-[24px] shrink-0"><use href="#binoc"/></svg>Find</button>
            <button role="tab" class="w-[230px] flex items-center gap-[4px] pl-[5px] border-r border-b border-[#a0a0a0]"><svg class="w-[25px] h-[26px] shrink-0"><use href="#unres"/></svg>Unresolved References</button>
            <button role="tab" class="w-[113px] flex items-center gap-[6px] pl-[7px] border-r border-b border-[#a0a0a0]"><svg class="w-[22px] h-[22px] shrink-0"><use href="#prog"/></svg>Progress</button>
            <div class="flex-1 flex justify-end gap-[20px] pt-[8px] pr-[15px] border-b border-[#a0a0a0]">
              <svg class="w-[16px] h-[16px]"><use href="#min"/></svg>
              <svg class="w-[17px] h-[17px]"><use href="#max"/></svg>
            </div>
          </div>
          <p class="h-[38px] px-[6px] pt-[3px] border-b border-[#a0a0a0]">0 messages in 0 categories. Hiding &lt;Warnings&gt; and &lt;Infos&gt;.</p>
          <div class="flex-1 mx-[3px] bg-white">
            <table class="w-full table-fixed border-collapse">
              <thead>
                <tr class="h-[41px] bg-[#f0f0f0] border-b border-[#a0a0a0] text-left">
                  <th class="w-[389px] font-normal pl-[7px]">ID</th>
                  <th class="font-normal"><span class="block h-[32px] pl-[8px] leading-[32px] border-l border-[#a0a0a0]">Message</span></th>
                </tr>
              </thead>
              <tbody>
                <tr class="h-[31px] border-b border-[#ececec]"><td class="border-r border-[#ececec]"></td><td></td></tr>
                <tr class="h-[31px] border-b border-[#ececec]"><td class="border-r border-[#ececec]"></td><td></td></tr>
                <tr class="h-[31px] border-b border-[#ececec]"><td class="border-r border-[#ececec]"></td><td></td></tr>
                <tr class="h-[31px] border-b border-[#ececec]"><td class="border-r border-[#ececec]"></td><td></td></tr>
                <tr class="h-[31px] border-b border-[#ececec]"><td class="border-r border-[#ececec]"></td><td></td></tr>
                <tr class="h-[31px] border-b border-[#ececec]"><td class="border-r border-[#ececec]"></td><td></td></tr>
                <tr class="h-[20px]"><td class="border-r border-[#ececec]"></td><td></td></tr>
              </tbody>
            </table>
          </div>
          <div class="h-[24px] flex items-center mx-[3px] mb-[4px] pl-[5px] pr-[5px] bg-[#f0f0f0]">
            <svg class="w-[14px] h-[14px] rotate-90"><use href="#v"/></svg>
            <div class="flex-1 h-full mx-[7px]"><div class="w-[74%] h-full bg-[#cdcdcd]"></div></div>
            <svg class="w-[14px] h-[14px] -rotate-90"><use href="#v"/></svg>
          </div>
        </section>
      </div>

      <!-- Status bar -->
      <div class="h-[38px] flex justify-end items-end pr-[442px]">
        <div class="w-[141px] h-[35px] flex items-center justify-center border-x border-[#a0a0a0]">PreCompile</div>
        <span class="h-[26px] ml-1 mb-[5px] border-l-2 border-dotted border-[#888]"></span>
      </div>

      <!-- Taskbar -->
      <footer class="h-[63px] flex bg-[#1e1e1e] text-white">
        <button class="w-[75px] flex items-center justify-center" aria-label="Start"><svg class="w-[26px] h-[26px]" viewBox="0 0 26 26"><path d="M0 3.500l11-1.500v10.500H0zM12.500 1.800L26 0v12.500H12.500zM0 14h11v10.500L0 23zM12.500 14H26v12l-13.500-1.800z" fill="#fff"/></svg></button>
        <label class="w-[536px] flex items-center gap-[17px] pl-[17px] bg-[#f2f2f2] border-t border-[#ccc] text-[#333]">
          <svg class="w-[27px] h-[27px]" viewBox="0 0 27 27"><circle cx="16.500" cy="10" r="8.500" fill="none" stroke="#333" stroke-width="1.800"/><path d="M10.500 16.500L2 25.500" stroke="#333" stroke-width="1.800"/></svg>
          <input type="text" aria-label="Search" placeholder="ここに入力して検索" class="flex-1 text-[20px] font-['Noto_Sans_CJK_JP',sans-serif] placeholder:text-[#444]">
        </label>
        <button class="w-[77px] flex items-center justify-center pr-1" aria-label="Task View"><svg class="w-[27px] h-[26px]" viewBox="0 0 27 26"><path d="M1 0v4h17V0M1 26v-4h17v4M2.500 8h14v10h-14z" fill="none" stroke="#fff" stroke-width="1.600"/><path d="M24 0v26" stroke="#fff" stroke-width="1.600"/><path d="M21.500 7h5v5h-5z" fill="#fff"/></svg></button>

        <button class="w-[62px] flex flex-col items-center" aria-label="Explorer"><span class="flex-1 flex items-center"><svg class="w-[34px] h-[30px]" viewBox="0 0 34 30"><path d="M0 1h13l3 3h18v25H0z" fill="#f8cf5f"/><path d="M0 1h13l3 3H0z" fill="#d99412"/><path d="M6 29V16h22v13h-6v-7H12v7z" fill="#3f9bdc"/></svg></span><i class="w-[49px] h-[3px] bg-[#76b9ed] border-r-[13px] border-[#4f7fa6]"></i></button>
        <button class="w-[62px] flex flex-col items-center" aria-label="Internet Explorer"><span class="flex-1 flex items-center"><svg class="w-[36px] h-[36px]" viewBox="0 0 36 36"><path d="M33 22c1-9-4-17-13-17S7 12 7 20s5 14 13 14c6 0 10-3 12-8h-8c-2 3-9 3-9-4zM15 16c1-6 10-6 11 0z" fill="#57c4f2" fill-rule="evenodd"/><path d="M4 34C0 30 6 17 17 8S33 0 34 4c0 2-1 4-2 5 1-4-1-5-4-4-6 2-16 11-20 18-3 5-3 8 0 8z" fill="#f8c41c"/></svg></span><i class="h-[3px]"></i></button>
        <button class="w-[62px] flex flex-col items-center" aria-label="Outlook"><span class="flex-1 flex items-center"><svg class="w-[36px] h-[36px]" viewBox="0 0 36 36"><path d="M14 10h21v17H14z" fill="#fff"/><path d="M15 10l10 9 10-9" fill="none" stroke="#0a6cc4" stroke-width="2"/><path d="M0 4l21-4v36L0 32z" fill="#0a6cc4"/><ellipse cx="10.500" cy="18" rx="4.500" ry="5.500" fill="none" stroke="#fff" stroke-width="3"/></svg></span><i class="w-[49px] h-[3px] bg-[#76b9ed]"></i></button>
        <button class="w-[62px] flex flex-col items-center" aria-label="Skype"><span class="flex-1 flex items-center"><svg class="w-[38px] h-[38px]" viewBox="0 0 38 38"><circle cx="11" cy="10" r="9" fill="#fff"/><circle cx="16" cy="17" r="15" fill="#fff"/><circle cx="23" cy="26" r="10" fill="#fff"/><circle cx="11" cy="10" r="7.500" fill="#14a8ec"/><circle cx="16" cy="17" r="13" fill="#14a8ec"/><path d="M22 12c-2-5-12-4-12 1s12 3 12 8-10 6-13 0" fill="none" stroke="#fff" stroke-width="3.400"/><circle cx="29" cy="29" r="8.500" fill="#6bb700" stroke="#fff" stroke-width="1.500"/><path d="M25.500 29l3 3 5-5.500" fill="none" stroke="#fff" stroke-width="2"/></svg></span><i class="w-[49px] h-[3px] bg-[#76b9ed]"></i></button>
        <button class="w-[61px] flex flex-col items-center" aria-label="Excel"><span class="flex-1 flex items-center"><svg class="w-[35px] h-[36px]" viewBox="0 0 35 36"><path d="M18 5h16v26H18z" fill="#fff"/><path d="M21 9h5M28 9h4M21 14h5M28 14h4M21 19h5M28 19h4M21 24h5M28 24h4M21 28h5M28 28h4" stroke="#1f7244" stroke-width="2.500"/><path d="M0 4l20-4v36L0 32z" fill="#1f7244"/><path d="M5.500 11l8 14M13.500 11l-8 14" stroke="#fff" stroke-width="2.800"/></svg></span><i class="w-[49px] h-[3px] bg-[#76b9ed] border-r-[13px] border-[#4f7fa6]"></i></button>
        <button class="w-[61px] flex flex-col items-center" aria-label="Notepad"><span class="flex-1 flex items-center"><svg class="w-[35px] h-[36px]" viewBox="0 0 35 36"><path d="M28 4l5 2 1 28-8 2z" fill="#c9b07a"/><path d="M11 2l20 2-5 31L0 30z" fill="url(#gNote)"/><path d="M11 1l20 2v3L10 4z" fill="#c8ccd0"/></svg></span><i class="w-[49px] h-[3px] bg-[#76b9ed] border-r-[13px] border-[#4f7fa6]"></i></button>
        <button class="w-[61px] flex flex-col items-center" aria-label="G"><span class="flex-1 flex items-center"><svg class="w-[33px] h-[36px]" viewBox="0 0 33 36"><path d="M32 0v8l-8 4h-8l-6 7v5l4 4h8l2-4h-8l3-6h14l-3 11-6 6H9l-9-8V16l9-10h13z" fill="#d9291c"/></svg></span><i class="w-[49px] h-[3px] bg-[#76b9ed]"></i></button>
        <button class="w-[61px] flex flex-col items-center" aria-label="Visual Studio Code"><span class="flex-1 flex items-center"><svg class="w-[37px] h-[38px]" viewBox="0 0 37 38"><path d="M27 0l10 5v28l-10 5L9 22l-6 5-3-2V13l3-2 6 5zM27 11l-11 8 11 8zM3 15v8l4-4z" fill="#1f8ad2" fill-rule="evenodd"/><path d="M27 0l10 5v28l-10 5z" fill="#2fa4f0"/></svg></span><i class="w-[49px] h-[3px] bg-[#76b9ed]"></i></button>
        <button class="w-[61px] flex flex-col items-center" aria-label="Acrobat"><span class="flex-1 flex items-center"><svg class="w-[34px] h-[34px]" viewBox="0 0 34 34"><rect x="1.500" y="1.500" width="31" height="31" fill="#2a0a08" stroke="#e2231a" stroke-width="3"/><path d="M8 26c3-1 9-10 9-17 0-3-3-2-2 1 2 7 8 12 12 11 2-1 0-3-4-3-5 0-13 3-15 6-1 1-1 2 0 2z" fill="none" stroke="#eee" stroke-width="1.600"/></svg></span><i class="w-[49px] h-[3px] bg-[#76b9ed]"></i></button>
        <button class="w-[61px] flex flex-col items-center" aria-label="PuTTY"><span class="flex-1 flex items-center"><svg class="w-[36px] h-[38px]" viewBox="0 0 36 38"><path d="M16 1h15v14H16zM2 20h15v12H2z" fill="#ccc" stroke="#fff"/><path d="M18 3h11v9H18zM4 22h11v8H4z" fill="#0a14c8"/><path d="M15 15h18v4H15zM0 32h20v5H0z" fill="#d8d8d8"/><path d="M25 8l-12 11 7 1-11 10 16-11-7-1z" fill="#f8f01c" stroke="#444" stroke-width=".6"/></svg></span><i class="w-[49px] h-[3px] bg-[#76b9ed] border-r-[13px] border-[#4f7fa6]"></i></button>
        <button class="w-[61px] flex flex-col items-center" aria-label="Chrome"><span class="flex-1 flex items-center"><svg class="w-[35px] h-[35px]" viewBox="0 0 35 35"><circle cx="17.500" cy="17.500" r="17" fill="#fccb3e"/><path d="M2.500 9.500A17 17 0 0 1 32.500 9.500H17.500L10 22z" fill="#dd4a3e"/><path d="M2.500 9.500A17 17 0 0 0 16 34.500L24 22H10z" fill="#2ea352"/><circle cx="17.500" cy="17.500" r="8" fill="#fff"/><circle cx="17.500" cy="17.500" r="6.300" fill="#4a8af0"/></svg></span><i class="w-[49px] h-[3px] bg-[#76b9ed] border-r-[13px] border-[#4f7fa6]"></i></button>
        <button class="w-[61px] flex flex-col items-center" aria-label="Notes"><span class="flex-1 flex items-center"><svg class="w-[36px] h-[38px]" viewBox="0 0 36 38"><path d="M1 3h27l4 4v30H1z" fill="#f4f4f4" stroke="#aaa"/><path d="M2 24c10-2 20-4 29-2v14H2z" fill="#5cc42a"/><path d="M6 12v10M10 16h4M16 16h4" stroke="#222" stroke-width="2.500"/><path d="M33 2l3 2-12 22-4 3 1-5z" fill="#f0a028" stroke="#8a5a14" stroke-width=".6"/></svg></span><i class="w-[49px] h-[3px] bg-[#76b9ed]"></i></button>
        <button class="w-[61px] flex flex-col items-center" aria-label="Merge"><span class="flex-1 flex items-center"><svg class="w-[34px] h-[34px]" viewBox="0 0 34 34"><path d="M0 3l3-3 9 9 4-5v12H2l5-4z" fill="#2c2f7c"/><path d="M34 3l-3-3-9 9-4-5v12h14l-5-4z" fill="#f08a28"/><path d="M0 31l3 3 9-9 4 5V18H2l5 4z" fill="#cc2a30"/><path d="M34 31l-3 3-9-9-4 5V18h14l-5 4z" fill="#2a7a4c"/></svg></span><i class="w-[49px] h-[3px] bg-[#76b9ed] border-r-[13px] border-[#4f7fa6]"></i></button>
        <button class="w-[61px] flex flex-col items-center" aria-label="Command Prompt"><span class="flex-1 flex items-center"><svg class="w-[36px] h-[30px]" viewBox="0 0 36 30"><rect x=".7" y=".7" width="34.600" height="28.600" fill="#000" stroke="#aaa" stroke-width="1.400"/><path d="M1 3h34" stroke="#ccc" stroke-width="4"/><text x="4" y="14" font-family="Liberation Mono" font-size="9" font-weight="bold" fill="#ddd">C:\_</text></svg></span><i class="w-[49px] h-[3px] bg-[#76b9ed]"></i></button>
        <button class="w-[61px] flex flex-col items-center" aria-label="Secure transfer"><span class="flex-1 flex items-center"><svg class="w-[36px] h-[36px]" viewBox="0 0 36 36"><path d="M12 14V9c0-7 12-7 12 0v5" fill="none" stroke="#bbb" stroke-width="3.500"/><rect x="8" y="14" width="20" height="16" rx="2" fill="#777"/><path d="M9 19h18M9 24h18" stroke="#999" stroke-width="1.500"/><path d="M0 0h12l-4 4 3 3-4 4-3-3-4 4z" fill="#1c7af0"/><path d="M36 36H23l4-4-4-4 4-4 4 4 5-4z" fill="#22c432"/></svg></span><i class="w-[49px] h-[3px] bg-[#76b9ed]"></i></button>
        <button class="w-[61px] flex flex-col items-center bg-[#505050]" aria-label="DaVinci Configurator"><span class="flex-1 flex items-center"><svg class="w-[40px] h-[40px]"><use href="#cfg"/></svg></span><i class="w-full h-[3px] bg-[#76b9ed]"></i></button>

        <div class="ml-[3px] w-[26px] flex flex-col items-center justify-between py-[6px] bg-[#f0f0f0]">
          <svg class="w-[14px] h-[14px] rotate-180"><use href="#v"/></svg>
          <svg class="w-[14px] h-[14px]"><use href="#v"/></svg>
        </div>

        <!-- Tray -->
        <div class="flex-1 flex items-center pl-[9px]">
          <svg class="w-[20px] h-[14px]" viewBox="0 0 20 14"><path d="M1 12l9-9 9 9" fill="none" stroke="#fff" stroke-width="1.800"/></svg>
          <svg class="w-[26px] h-[22px] ml-[14px]" viewBox="0 0 26 22"><path d="M11 6h12v12H8v-4M23 9.500h2v5h-2M2 1v4M7 1v4M1 5h7v3c0 4-7 4-7 0zM4.500 11v7H8" fill="none" stroke="#fff" stroke-width="1.600"/></svg>
          <svg class="w-[22px] h-[22px] ml-[16px]" viewBox="0 0 22 22"><path d="M2 21C2 10 10 2 21 2M6 21C6 13 13 6 21 6M10.500 21c0-6 4-10.500 10.500-10.500M15 21c0-3 2-6 6-6" fill="none" stroke="#ddd" stroke-width="1.600"/><circle cx="19" cy="19.500" r="2" fill="#fff"/></svg>
          <svg class="w-[24px] h-[22px] ml-[11px]" viewBox="0 0 24 22"><path d="M1 8h4l5-6v18l-5-6H1z" fill="none" stroke="#fff" stroke-width="1.600"/><path d="M13 8c1.500 2 1.500 4 0 6M16.500 5c3 4 3 8 0 12M20 2c4.500 6 4.500 12 0 18" fill="none" stroke="#ddd" stroke-width="1.500"/></svg>
          <span class="ml-[12px] text-[24px] leading-[30px] font-['Noto_Sans_CJK_SC',sans-serif]">中</span>
          <span class="ml-[22px] w-[23px] h-[24px] flex items-center justify-center bg-white text-[#1e1e1e] text-[20px] leading-[24px] font-['Noto_Sans_CJK_SC',sans-serif]">拼</span>
          <div class="ml-[21px] w-[100px] text-center text-[17px] leading-[28px]"><div>9:03</div><div>2019/11/07</div></div>
          <svg class="w-[40px] h-[40px] ml-[22px] mt-[12px]" viewBox="0 0 40 40"><path d="M0 0h26v20H11l-5 6v-6H0z" fill="#fff"/><path d="M5 5h16M5 9.500h16M5 14h10" stroke="#1e1e1e" stroke-width="1.800"/><circle cx="25" cy="25" r="12" fill="#333" stroke="#888" stroke-width="1.500"/><text x="25" y="31" text-anchor="middle" font-family="Open Sans" font-size="17" fill="#fff">1</text></svg>
          <span class="ml-auto mr-[6px] w-px h-full bg-[#666]"></span>
        </div>
      </footer>
    </div>

    <!-- Callouts laid over the window -->
    <svg class="absolute left-[1474px] top-[200px] w-[230px] h-[440px] overflow-visible z-20 pointer-events-none" viewBox="0 0 230 440">
      <path d="M208 13L86 83l122-13zM154 259l-20-6 20 18zM114 372L0 330l114 105z" fill="#5b9bd5"/>
      <path d="M206 14L86 83l120-13M152 258l-18-5 18 17M112 371L0 330l112 103" fill="none" stroke="#41719c" stroke-width="2"/>
    </svg>
    <aside class="absolute left-[1679px] top-[173px] right-0 h-[233px] border-2 border-[#41719c] bg-[#5b9bd5] pt-[11px] pl-[14px] text-white text-[17px] leading-[22px] whitespace-nowrap font-light font-['Noto_Sans_CJK_SC',sans-serif] z-10">
      <p class="pl-[5px]">1、一类中断（Cat1）</p>
      <p>不会访问OS服务，中断结束后直接返回中断处（就和我们常用的单片机中断一样，<br>但我们更常使用的是二类中断）。这里OS依然按照正常的调度执行</p>
      <p class="mt-[22px]">2、二类中断（Cat2）</p>
      <p>会访问部分OS服务（一些OS服务是不允许的，比如TerminateTask），中断结束后<br>会发生一次OS的重新调度</p>
    </aside>
    <aside class="absolute left-[1626px] top-[450px] w-[113px] h-[53px] flex items-center border-2 border-[#41719c] bg-[#5b9bd5] pl-[14px] pb-[8px] text-white text-[23px] font-light font-['Noto_Sans_CJK_SC',sans-serif] z-10">优先级</aside>
    <aside class="absolute left-[1586px] top-[530px] w-[466px] h-[251px] border-2 border-[#41719c] bg-[#5b9bd5] pt-[2px] pl-[14px] text-white text-[17px] leading-[23px] whitespace-nowrap font-light font-['Noto_Sans_CJK_SC',sans-serif] z-10">
      <p>1、基础任务（Basic Task）</p>
      <p>当启动操作系统后，所有的Task都进入到挂起状态；然后由<br>用户去触发需要执行的Task（一般在DaVinci中都有配置，可<br>以生成代码，</p>
      <p>2、扩展任务（Extended Task）</p>
      <p>但是基础任务有一个缺陷：比如我们有两个Task，我的高优<br>先级Task在执行中需要一个ADC的数据，但是我们的ADC配<br>置成了1秒采样一次，而我们的高优先级Task就需要循环等<br>待1秒ADC数据更新，低优先级任务此时却无法执行，就白<br>白浪费了1秒CPU资源。</p>
    </aside>
  </div>
</body>
</html>
